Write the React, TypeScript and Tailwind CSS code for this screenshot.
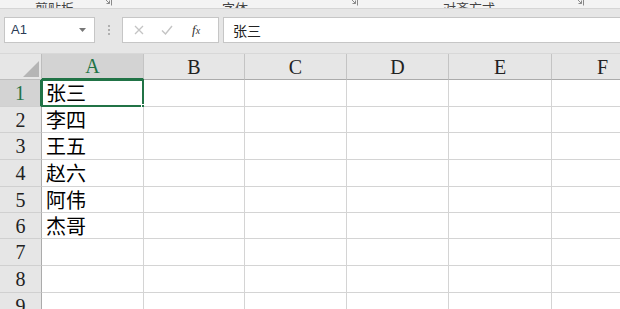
import React from 'react';

const cols = [
  { name: 'A', w: 'w-[102px]' },
  { name: 'B', w: 'w-[101px]' },
  { name: 'C', w: 'w-[102px]' },
  { name: 'D', w: 'w-[102px]' },
  { name: 'E', w: 'w-[103px]' },
  { name: 'F', w: 'w-[102px]' },
];

const rows = [
  { n: 1, h: 'h-[27px]', v: '张三' },
  { n: 2, h: 'h-[26px]', v: '李四' },
  { n: 3, h: 'h-[27px]', v: '王五' },
  { n: 4, h: 'h-[27px]', v: '赵六' },
  { n: 5, h: 'h-[26px]', v: '阿伟' },
  { n: 6, h: 'h-[26px]', v: '杰哥' },
  { n: 7, h: 'h-[27px]', v: '' },
  { n: 8, h: 'h-[27px]', v: '' },
  { n: 9, h: 'h-[27px]', v: '' },
];

const serif = "font-['Liberation_Serif','Times_New_Roman',serif]";
const cjk = "font-['Noto_Sans_CJK_SC',sans-serif]";

function Launcher() {
  // le petit bouton d'ouverture de groupe du ruban
  return (
    <svg width="9" height="9" viewBox="0 0 9 9" className="shrink-0">
      <path d="M0.5 0.5h8v8" fill="none" stroke="#8a8a8a" strokeWidth="1" />
      <path d="M2 2l4.5 4.5M6.5 3.5v3h-3" fill="none" stroke="#8a8a8a" strokeWidth="1" />
    </svg>
  );
}

function RibbonStrip() {
  return (
    <div className={`h-[9px] bg-[#f3f3f3] border-b border-[#d5d5d5] overflow-hidden flex items-end text-[13px] leading-[13px] text-[#444] ${cjk}`}>
      <div className="flex items-end h-full">
        <span className="ml-[35px] w-[68px] -mb-[6px]">剪贴板</span>
        <div className="mb-[2px]"><Launcher /></div>
      </div>
      <div className="flex items-end h-full">
        <span className="ml-[110px] w-[127px] -mb-[6px]">字体</span>
        <div className="mb-[2px]"><Launcher /></div>
      </div>
      <div className="flex items-end h-full">
        <span className="ml-[85px] w-[132px] -mb-[6px]">对齐方式</span>
        <div className="mb-[2px]"><Launcher /></div>
      </div>
    </div>
  );
}

function FormulaBar() {
  return (
    <div className="flex items-center h-[26px] mt-[8px] pl-[4px]">
      <div className="w-[91px] h-full bg-white border border-[#c6c6c6] flex items-center justify-between pl-[6px] pr-[8px]">
        <span className="text-[13px] text-[#2b3a55] font-['Liberation_Sans',Arial,sans-serif]">A1</span>
        <svg width="7" height="4" viewBox="0 0 7 4"><path d="M0 0h7L3.5 4z" fill="#777" /></svg>
      </div>
      <div className="w-[27px] flex flex-col items-center gap-[2px]">
        <span className="w-[2px] h-[2px] bg-[#b0b0b0]" />
        <span className="w-[2px] h-[2px] bg-[#b0b0b0]" />
        <span className="w-[2px] h-[2px] bg-[#b0b0b0]" />
      </div>
      <div className="w-[97px] h-full bg-white border border-[#c6c6c6] flex items-center">
        <svg width="10" height="10" viewBox="0 0 10 10" className="ml-[11px]">
          <path d="M1 1l8 8M9 1l-8 8" stroke="#c4c4c4" strokeWidth="1.3" />
        </svg>
        <svg width="12" height="10" viewBox="0 0 12 10" className="ml-[17px]">
          <path d="M1 5.5l3.5 3.5L11 1" fill="none" stroke="#c4c4c4" strokeWidth="1.4" />
        </svg>
        <span className={`ml-[19px] text-[13px] italic text-[#333] ${serif}`}>
          f<span className="text-[10px]">x</span>
        </span>
      </div>
      <div className={`ml-[4px] flex-1 h-full bg-white border border-[#c6c6c6] border-r-0 flex items-center pl-[9px] text-[14px] text-[#222] ${cjk}`}>
        张三
      </div>
    </div>
  );
}

function Grid() {
  return (
    <div className="mt-[10px] flex flex-col">
      <div className="flex h-[27px] border-t border-[#d8d8d8]">
        <div className="w-[42px] shrink-0 border-r border-b border-[#bdbdbd] bg-[#e6e6e6] flex items-end justify-end p-[2px]">
          <svg width="16" height="16" viewBox="0 0 16 16"><path d="M16 0v16H0z" fill="#b5b5b5" /></svg>
        </div>
        {cols.map((c, i) => (
          <div
            key={c.name}
            className={`${c.w} shrink-0 border-r border-[#c4c4c4] flex items-center justify-center text-[20px] ${serif} ${
              i === 0
                ? 'bg-[#d3d3d3] text-[#217346] border-b-2 border-b-[#217346]'
                : 'bg-[#e6e6e6] text-[#222] border-b border-b-[#ababab]'
            }`}
          >
            {c.name}
          </div>
        ))}
      </div>
      {rows.map((r) => (
        <div key={r.n} className={`flex ${r.h}`}>
          <div
            className={`w-[42px] shrink-0 border-b border-[#d0d0d0] flex items-center justify-center text-[20px] ${serif} ${
              r.n === 1
                ? 'bg-[#d3d3d3] text-[#217346] border-r-2 border-r-[#217346]'
                : 'bg-[#e6e6e6] text-[#222] border-r border-r-[#ababab]'
            }`}
          >
            {r.n}
          </div>
          {cols.map((c, i) => (
            <div
              key={c.name}
              className={`${c.w} shrink-0 bg-white border-r border-b border-[#d4d4d4] relative flex items-center pl-[4px] text-[20px] leading-[22px] text-black ${cjk}`}
            >
              {i === 0 ? r.v : ''}
              {i === 0 && r.n === 1 && (
                <>
                  <div className="absolute -left-px -top-px -right-px -bottom-px border-2 border-[#217346]" />
                  <div className="absolute -right-[4px] -bottom-[4px] w-[6px] h-[6px] bg-[#217346] border border-white" />
                </>
              )}
            </div>
          ))}
        </div>
      ))}
    </div>
  );
}

export default function App() {
  return (
    <div className="w-[620px] h-[309px] overflow-hidden bg-[#e6e6e6]">
      <RibbonStrip />
      <FormulaBar />
      <Grid />
    </div>
  );
}
